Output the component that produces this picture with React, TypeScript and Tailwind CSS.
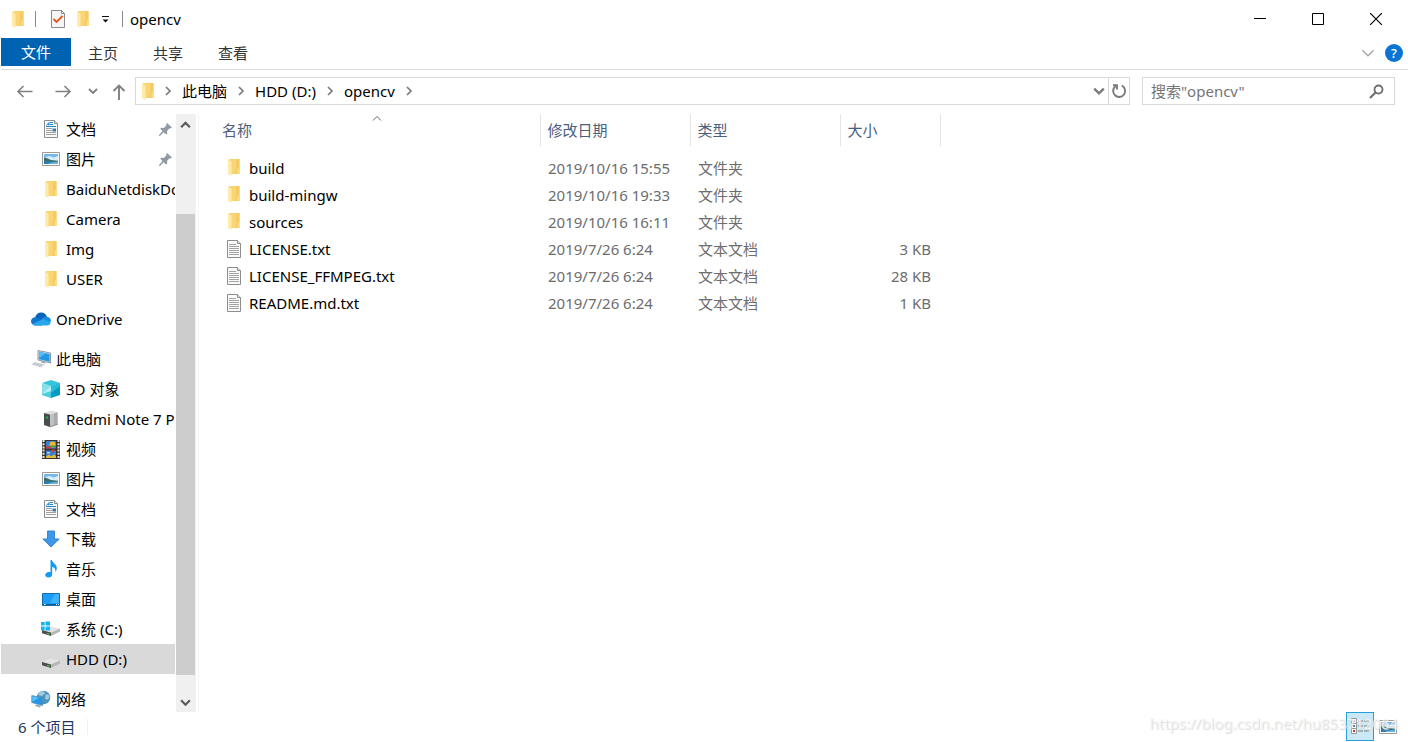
import { useState } from 'react';
import type { ReactNode } from 'react';

type IconName =
    | 'folder' | 'document' | 'picture' | 'onedrive' | 'computer' | 'cube' | 'phone' | 'video'
    | 'download' | 'music' | 'desktop' | 'systemDrive' | 'drive' | 'network' | 'text';

interface NavItem {
    label: string;
    icon: IconName;
    root?: boolean;
    pinned?: boolean;
    selected?: boolean;
}

interface FileEntry {
    name: string;
    icon: IconName;
    modified: string;
    type: string;
    size: string;
}

const navGroups: NavItem[][] = [
    [
        { label: '文档', icon: 'document', pinned: true },
        { label: '图片', icon: 'picture', pinned: true },
        { label: 'BaiduNetdiskDownload', icon: 'folder' },
        { label: 'Camera', icon: 'folder' },
        { label: 'Img', icon: 'folder' },
        { label: 'USER', icon: 'folder' },
    ],
    [{ label: 'OneDrive', icon: 'onedrive', root: true }],
    [
        { label: '此电脑', icon: 'computer', root: true },
        { label: '3D 对象', icon: 'cube' },
        { label: 'Redmi Note 7 Pro', icon: 'phone' },
        { label: '视频', icon: 'video' },
        { label: '图片', icon: 'picture' },
        { label: '文档', icon: 'document' },
        { label: '下载', icon: 'download' },
        { label: '音乐', icon: 'music' },
        { label: '桌面', icon: 'desktop' },
        { label: '系统 (C:)', icon: 'systemDrive' },
        { label: 'HDD (D:)', icon: 'drive', selected: true },
    ],
    [{ label: '网络', icon: 'network', root: true }],
];

const files: FileEntry[] = [
    { name: 'build', icon: 'folder', modified: '2019/10/16 15:55', type: '文件夹', size: '' },
    { name: 'build-mingw', icon: 'folder', modified: '2019/10/16 19:33', type: '文件夹', size: '' },
    { name: 'sources', icon: 'folder', modified: '2019/10/16 16:11', type: '文件夹', size: '' },
    { name: 'LICENSE.txt', icon: 'text', modified: '2019/7/26 6:24', type: '文本文档', size: '3 KB' },
    { name: 'LICENSE_FFMPEG.txt', icon: 'text', modified: '2019/7/26 6:24', type: '文本文档', size: '28 KB' },
    { name: 'README.md.txt', icon: 'text', modified: '2019/7/26 6:24', type: '文本文档', size: '1 KB' },
];

const FolderIcon = () => (
    <svg width="12" height="17" viewBox="0 0 12 17">
        <path d="M1 0h10.5v11H12v4H1z" fill="#f9d675" />
        <path d="M8 0h3.5v11H12v4H7.5z" fill="#f5cb68" />
        <path d="M9.5 9.5h2.5V15H9.5z" fill="#fbdc82" />
        <path d="M0 .5 3.5 2.5V17L0 15z" fill="#ffeaa8" />
    </svg>
);

const DriveBody = () => (
    <>
        <path d="M1 12 9 8.5l10 2-9 4z" fill="#e3e3e5" />
        <path d="M1 12l9 2.5V18l-9-2.7z" fill="#4c4f50" />
        <path d="M10 14.5 19 10.5v3L10 18z" fill="#b4b6b8" />
        <path d="M6 15.5l2.5.7" stroke="#39d353" strokeWidth="1.2" />
    </>
);

const TextFileIcon = () => (
    <svg width="16" height="18" viewBox="0 0 16 18">
        <path d="M1.5.5h10l3 3v14h-13z" fill="#fafafa" stroke="#8d8d8d" />
        <path d="M11.5.5v3h3" fill="#e6e6e6" stroke="#8d8d8d" />
        <path d="M3 4.5h7M3 6.5h10M3 8.5h10M3 10.5h10M3 12.5h10M3 14.5h10" stroke="#a3a3a3" />
    </svg>
);

const PictureIcon = () => (
    <svg width="18" height="14" viewBox="0 0 18 14">
        <path d="M.5.5h17v13H.5z" fill="#fff" stroke="#9a9a9a" />
        <path d="M2 2h14v10H2z" fill="#75b7ec" />
        <path d="M2 5.5 7 4l5 1.5L16 4v5H2z" fill="#d8edf8" />
        <path d="M2 5.5c3 0 4.5 1.5 7 2.5l7 .8V10H2z" fill="#3b6f66" />
        <path d="M2 9.2l14 .3V12H2z" fill="#2c7bb5" />
        <path d="M7 11l9-1.5V12H7z" fill="#6cb1dc" />
    </svg>
);

const icons: Record<IconName, ReactNode> = {
    folder: <FolderIcon />,
    text: <TextFileIcon />,
    picture: <PictureIcon />,
    document: (
        <svg width="16" height="18" viewBox="0 0 16 18">
            <path d="M1.5.5h10l3 3v14h-13z" fill="#fafafa" stroke="#8d8d8d" />
            <path d="M11.5.5v3h3" fill="#e0e0e0" stroke="#8d8d8d" />
            <path d="M3.5 5.5 6 2.5v3M4.5 4.5H6M7 2.5h3M7 4.5h3M3 6.5h10" stroke="#1c87cf" fill="none" />
            <path d="M3 8.5h6M3 10.5h6M3 12.5h10M3 14.5h10" stroke="#a0a0a0" />
            <path d="M9.5 8.5H13v3H9.5z" fill="#3977a8" />
        </svg>
    ),
    onedrive: (
        <svg width="20" height="14" viewBox="0 0 20 14">
            <path d="M4 5.5C5 2 7.5.5 10 .5c3.3 0 5.3 2 6 4.5L10 9z" fill="#0864b8" />
            <path d="M5 13.5c-3 0-5-1.8-5-4.2C0 7 1.8 5.2 4.2 5.2L12 8l-1 5.5z" fill="#1078d0" />
            <path d="M10 8c1-2.5 3.5-3.5 6-3.2 2.5.3 4 2 4 4.4L17 11z" fill="#1790df" />
            <path d="M1.5 12 12 7.3l7.8 2.9c-.3 2-1.8 3.3-3.8 3.3H5c-1.5 0-2.6-.5-3.5-1.500z" fill="#28a8ea" />
        </svg>
    ),
    computer: (
        <svg width="20" height="18" viewBox="0 0 20 18">
            <path d="M0 14.5 4 12l10 2.5-4 3z" fill="#d5d8da" />
            <path d="M2 14.7l3-2M5 15.5l3-2M8 16.3l3-2" stroke="#a9adb0" strokeWidth=".7" />
            <path d="M7 .5 19.5 3v10L7 10z" fill="#e0e6e9" stroke="#6e7f8b" strokeWidth=".8" />
            <path d="M8 1.7 18.6 4v7.8L8 9.2z" fill="#2298e5" />
            <path d="M8 1.7 15 3.2 8 8z" fill="#55bdf5" />
            <path d="M10 11l4 1v1.5l-4-1z" fill="#a1aab0" />
        </svg>
    ),
    cube: (
        <svg width="18" height="18" viewBox="0 0 18 18">
            <path d="M9 0 18 3 9 6.3 0 3z" fill="#35c6dc" />
            <path d="M0 3 9 6.3V18l-9-3z" fill="#85e0ec" />
            <path d="M18 3 9 6.3V18l9-3z" fill="#079ac4" />
            <path d="M9 6.3v11L0 14z" fill="#b7eff4" />
            <path d="M0 14l9-3v7l-9-3z" fill="#4cced9" />
            <path d="M9 6.3V13l9-7V3z" fill="#2bbbdd" />
        </svg>
    ),
    phone: (
        <svg width="16" height="18" viewBox="0 0 16 18">
            <path d="M1 3 9 .5l5.5 1.8L7 4.5z" fill="#dedede" />
            <path d="M1 3l6 1.5V17l-6-2z" fill="#4a4d4e" />
            <path d="M7 4.5 14.5 2.3V14L7 17z" fill="#bfc0c2" />
            <path d="M11 3.5l3.5-1.2V14L11 15.5z" fill="#a9abad" />
            <path d="M3 6.5h2v2H3z" fill="#27b23a" />
            <path d="M7 17l8-3" stroke="#888" />
        </svg>
    ),
    video: (
        <svg width="18" height="19" viewBox="0 0 18 19">
            <path d="M0 0h18v19H0z" fill="#39332f" />
            <path d="M1.5 0v19M16.5 0v19" stroke="#e9e9e9" strokeWidth="2" strokeDasharray="2 1.2" />
            <path d="M4 1h10v7.5H4zM4 10.5h10V18H4z" fill="#3f7fd0" />
            <circle cx="10.5" cy="4.5" r="3" fill="#e7bb35" />
            <path d="M4 6.5h5V8.5H4zM9 9.5h4L11 13z" fill="#d23b30" />
            <path d="M8 5.5h6v1.5H8z" fill="#4b9b36" />
            <path d="M4 16.5l3-2 2 2 3-2 2 2V18H4z" fill="#e7bb35" />
            <path d="M5 12h3v1.5H5z" fill="#b0d7f5" />
        </svg>
    ),
    download: (
        <svg width="18" height="18" viewBox="0 0 18 18">
            <path d="M5.5 1h7v8h4.7L9 17 .8 9h4.7z" fill="#3d98ea" stroke="#2f80cc" strokeWidth=".9" />
        </svg>
    ),
    music: (
        <svg width="14" height="18" viewBox="0 0 14 18">
            <path d="M6.5 0H8c.3 3 4.8 4.2 4.8 8 0 1.8-.6 3-1.5 4 .6-3-.8-4.7-3.1-5v7.5c0 1.8-1.7 3-3.7 3S1.200 16.600 1.200 15c0-1.700 2-3.200 4-3 .5 0 1 .1 1.300.3z" fill="#129bf0" />
        </svg>
    ),
    desktop: (
        <svg width="18" height="13" viewBox="0 0 18 13">
            <path d="M.5.5h17v12H.5z" fill="#1a9cf8" stroke="#126db1" />
            <path d="M8 10l5-9h4v9z" fill="#3fb2fd" />
            <path d="M1 11.5h16" stroke="#0b5897" />
            <path d="M2 11.5h1.5M14 11.5h1M16 11.5h.8" stroke="#fff" />
        </svg>
    ),
    systemDrive: (
        <svg width="20" height="18" viewBox="0 0 20 18">
            <g transform="translate(0 -2)"><DriveBody /></g>
            <path d="M0 2h3.7v3.6H0zM4.5 1.5H9v4.1H4.5zM0 6.4h3.7V10H0zM4.5 6.4H9v4.1H4.5z" fill="#12b5f1" />
        </svg>
    ),
    drive: (
        <svg width="20" height="18" viewBox="0 0 20 18"><DriveBody /></svg>
    ),
    network: (
        <svg width="20" height="18" viewBox="0 0 20 18">
            <circle cx="12.5" cy="7.5" r="6.8" fill="#4f94bd" />
            <path d="M8 3c3-2.5 5-2 6 .5L11 6 7 5zM15 4l3 1 .5 3-3 2L14 8z" fill="#a3cbe0" />
            <path d="M.8 5.5 11.5 8v7.5L.8 12.5z" fill="#2696e3" stroke="#4a8fc0" strokeWidth=".8" />
            <path d="M1.3 6.2 8 7.8l-6.7 4z" fill="#5dc0f7" />
            <path d="M5 14.5l5 1.3-1 1.7-5-1.5z" fill="#9aa6ad" />
        </svg>
    ),
};

const PinIcon = () => (
    <svg width="13" height="13" viewBox="0 0 13 13" className="shrink-0">
        <path d="M8 0l5 4.5-1.5 1-1-.2L8 8l.3 2.5-1.2 1L4.6 9.2 1 13l-1-.2L.1 12l3.4-4L1.2 5.8l1-1 2.6.2L7.5 2.3 7.2 1z" fill="#8e9aa5" />
    </svg>
);

interface ChevronProps {
    direction: 'up' | 'down' | 'right';
    size?: number;
    weight?: number;
}

const chevronPaths = {
    up: 'M1 7.5 5 3.5 9 7.5',
    down: 'M1 3 5 7 9 3',
    right: 'M3 1 7 5 3 9',
};

const Chevron = ({ direction, size = 10, weight = 2 }: ChevronProps) => (
    <svg width={size} height={size} viewBox="0 0 10 10" fill="none" stroke="currentColor" strokeWidth={weight}>
        <path d={chevronPaths[direction]} />
    </svg>
);

const TitleBar = () => (
    <header className="flex h-[38px] items-center justify-between pl-3">
        <div className="flex items-center">
            <FolderIcon />
            <span className="mx-[11px] h-4 w-px bg-[#8a8a8a]" />
            <button aria-label="属性" className="ml-1">
                <svg width="14" height="18" viewBox="0 0 14 18">
                    <path d="M.5.5h10l3 3v14H.5z" fill="#f6f6f6" stroke="#8b8b8b" />
                    <path d="M10.5.5v3h3" fill="none" stroke="#8b8b8b" />
                    <path d="M2.5 9l3 3L11.5 6" fill="none" stroke="#e8541c" strokeWidth="1.8" />
                </svg>
            </button>
            <button aria-label="新建文件夹" className="ml-3"><FolderIcon /></button>
            <button aria-label="自定义快速访问工具栏" className="ml-3">
                <svg width="9" height="8" viewBox="0 0 9 8">
                    <path d="M1 1.5h7" stroke="#111" />
                    <path d="M1.5 4.5h6L4.5 7.5z" fill="#111" />
                </svg>
            </button>
            <span className="ml-3 mr-[7px] h-4 w-px bg-[#8a8a8a]" />
            <h1>opencv</h1>
        </div>
        <div className="flex h-full pr-[3px]">
            <button aria-label="最小化" className="grid w-[58px] place-items-center">
                <svg width="12" height="12" viewBox="0 0 12 12"><path d="M0 5.5h12" stroke="#000" /></svg>
            </button>
            <button aria-label="最大化" className="grid w-[58px] place-items-center">
                <svg width="12" height="12" viewBox="0 0 12 12"><path d="M.5.5h11v11H.5z" stroke="#000" fill="none" /></svg>
            </button>
            <button aria-label="关闭" className="grid w-[58px] place-items-center">
                <svg width="12" height="12" viewBox="0 0 12 12"><path d="M0 0l12 12M12 0 0 12" stroke="#000" strokeWidth="1.2" /></svg>
            </button>
        </div>
    </header>
);

const Ribbon = () => (
    <nav className="ml-px flex h-8 justify-between border-b border-[#dadbdc] text-[#333]">
        <div className="flex h-7">
            <button className="w-[70px] bg-[#0063b1] text-white">文件</button>
            <button className="w-16 pt-px">主页</button>
            <button className="w-[66px] pt-px">共享</button>
            <button className="w-16 pt-px">查看</button>
        </div>
        <div className="flex h-[30px] items-center gap-[10px] pr-[5px]">
            <button aria-label="展开功能区" className="text-[#a5a5a5]">
                <Chevron direction="down" size={14} weight={1} />
            </button>
            <button aria-label="帮助" className="grid size-[18px] place-items-center rounded-full bg-[#0a74d4] text-[13px] font-medium leading-none text-white">
                ?
            </button>
        </div>
    </nav>
);

const Crumb = ({ children }: { children: ReactNode }) => (
    <>
        <span className="text-[#7a7a7a]"><Chevron direction="right" weight={1.7} /></span>
        <button>{children}</button>
    </>
);

const AddressRow = () => {
    const [query, setQuery] = useState('');

    return (
        <div className="flex items-center pb-[9px] pl-4 pr-[13px] pt-[7px]">
            <div className="flex w-[119px] shrink-0 items-center text-[#808080]">
                <button aria-label="返回" className="mr-[22px]">
                    <svg width="17" height="14" viewBox="0 0 17 14" fill="none" stroke="currentColor" strokeWidth="1.6">
                        <path d="M16.5 7.5H2M7.5 2 2 7.5 7.5 13" />
                    </svg>
                </button>
                <button aria-label="前进" className="mr-4">
                    <svg width="17" height="14" viewBox="0 0 17 14" fill="none" stroke="currentColor" strokeWidth="1.6">
                        <path d="M.5 7.5H15M9.5 2 15 7.5 9.5 13" />
                    </svg>
                </button>
                <button aria-label="最近浏览的位置" className="mr-[14px]"><Chevron direction="down" size={10} weight={1.8} /></button>
                <button aria-label="上移">
                    <svg width="14" height="17" viewBox="0 0 14 17" fill="none" stroke="currentColor" strokeWidth="1.9">
                        <path d="M7 17V2.5M1.5 8 7 2.5 12.5 8" />
                    </svg>
                </button>
            </div>
            <div className="flex h-7 min-w-0 flex-1 items-center border border-[#d9d9d9] pl-[6px]">
                <div className="flex flex-1 items-center gap-[9px]">
                    <FolderIcon />
                    <Crumb>此电脑</Crumb>
                    <Crumb>HDD (D:)</Crumb>
                    <Crumb>opencv</Crumb>
                    <span className="text-[#7a7a7a]"><Chevron direction="right" weight={1.7} /></span>
                </div>
                <button aria-label="以前的位置" className="px-[3px] text-[#7a7a7a]"><Chevron direction="down" size={12} /></button>
                <button aria-label="刷新" className="grid h-full w-[21px] place-items-center border-l border-[#d9d9d9] text-[#7a7a7a]">
                    <svg width="16" height="16" viewBox="0 0 16 16" fill="none" stroke="currentColor" strokeWidth="1.9">
                        <path d="M10.8 2.6A6 6 0 1 1 4.5 3.2M2 2.2h4v4.3" />
                    </svg>
                </button>
            </div>
            <div className="ml-3 flex h-7 w-[253px] items-center border border-[#d9d9d9] pl-2 pr-[10px] text-[#6d6d6d]">
                <input
                    type="text"
                    aria-label="搜索"
                    value={query}
                    onChange={e => setQuery(e.target.value)}
                    placeholder={'搜索"opencv"'}
                    className="min-w-0 flex-1 outline-none placeholder:text-[#757575]"
                />
                <svg width="15" height="15" viewBox="0 0 15 15" fill="none" stroke="currentColor">
                    <circle cx="9.5" cy="5.5" r="4" strokeWidth="1.8" />
                    <path d="M6.5 8.5 1 14" strokeWidth="2.2" />
                </svg>
            </div>
        </div>
    );
};

const NavRow = ({ item }: { item: NavItem }) => (
    <li>
        <a
            href="#"
            className={`flex h-[30px] items-center gap-[5px] pr-[3px] ${item.root ? 'pl-[30px]' : 'pl-10'} ${item.selected ? 'bg-[#d9d9d9]' : ''}`}
        >
            <span className="grid w-5 shrink-0 place-items-center">{icons[item.icon]}</span>
            <span className="flex-1 whitespace-nowrap">{item.label}</span>
            {item.pinned && <PinIcon />}
        </a>
    </li>
);

const Sidebar = () => (
    <aside className="flex w-[199px] shrink-0 border-r border-[#f3f3f3]">
        {/* The tree is clipped by the pane, the status bar sits right below */}
        <nav className="ml-px mr-px h-[598px] min-w-0 flex-1 overflow-hidden">
            {navGroups.map((group, i) => (
                <ul key={i} className="mb-[10px]">
                    {group.map(item => <NavRow key={item.label} item={item} />)}
                </ul>
            ))}
        </nav>
        <div className="mr-[2px] flex w-5 flex-col bg-[#f0f0f0] text-[#5c5c5c]">
            <button aria-label="向上滚动" className="grid h-5 place-items-center pr-px"><Chevron direction="up" size={11} /></button>
            <div className="grow-[80]" />
            <div className="mr-px grow-[461] bg-[#cdcdcd]" />
            <div className="grow-[17]" />
            <button aria-label="向下滚动" className="grid h-5 place-items-center pr-px"><Chevron direction="down" size={11} /></button>
        </div>
    </aside>
);

const FileTable = () => (
    <main className="min-w-0 flex-1 pl-[15px]">
        <table className="w-[726px] table-fixed text-left">
            <colgroup>
                <col className="w-[326px]" />
                <col className="w-[150px]" />
                <col className="w-[150px]" />
                <col className="w-[100px]" />
            </colgroup>
            <thead className="text-[#4c607a]">
                <tr className="h-8">
                    <th className="relative border-r border-[#e5e5e5] pl-2 font-normal">
                        名称
                        <span className="absolute left-1/2 top-0 -translate-x-1/2 -translate-y-px text-[#666]">
                            <Chevron direction="up" weight={1} />
                        </span>
                    </th>
                    <th className="border-r border-[#e5e5e5] pl-[7px] font-normal">修改日期</th>
                    <th className="border-r border-[#e5e5e5] pl-[7px] font-normal">类型</th>
                    <th className="border-r border-[#e5e5e5] pl-[7px] font-normal">大小</th>
                </tr>
            </thead>
            <tbody className="text-[#6d6d6d] before:block before:h-2">
                {files.map(file => (
                    <tr key={file.name} className="h-[27px]">
                        <td className="pl-[10px] text-black">
                            <div className="flex items-center gap-[5px]">
                                <span className="grid w-5 justify-items-center">{icons[file.icon]}</span>
                                {file.name}
                            </div>
                        </td>
                        <td className="whitespace-nowrap pl-2">{file.modified}</td>
                        <td className="pl-2">{file.type}</td>
                        <td className="pr-[9px] text-right">{file.size}</td>
                    </tr>
                ))}
            </tbody>
        </table>
    </main>
);

const StatusBar = () => (
    <footer className="relative flex h-[30px] items-center justify-between pl-[18px] pr-2 text-[#1e395b]">
        <span className="border-r border-[#f0f0f0] pr-3 leading-4">6 个项目</span>
        <div className="flex h-full items-center gap-[2px]">
            <button aria-label="详细信息" className="grid h-[29px] w-7 place-items-center self-start border border-[#26a0da] bg-[#cbe8f6]">
                <svg width="18" height="17" viewBox="0 0 18 17" fill="none">
                    <path d="M.5.5h5v5h-5zM.5 5.5h5v5h-5zM.5 10.5h5v5h-5z" fill="#fff" stroke="#969696" />
                    <path d="M2 2h2v2H2z" fill="#2a7bb9" />
                    <path d="M2 7h2v2H2z" fill="#4b7da0" />
                    <path d="M2 12h2v2H2z" fill="#c8352b" />
                    <path d="M7 3h5M13 3h5M7 8h5M13 8h5M7 13h5M13 13h5" stroke="#7a7a7a" />
                </svg>
            </button>
            <button aria-label="大图标" className="grid w-6 place-items-center"><PictureIcon /></button>
        </div>
        <span className="pointer-events-none absolute right-[10px] top-px text-[15px] text-[#f4f4f4]/80 [text-shadow:1px_1px_1px_#dadada]">
            https://blog.csdn.net/hu853712064
        </span>
    </footer>
);

export default function App() {
    return (
        <div className="flex min-h-screen flex-col bg-white font-['Noto_Sans','Noto_Sans_CJK_SC',sans-serif] text-[15px] leading-5 text-black">
            <TitleBar />
            <Ribbon />
            <AddressRow />
            <div className="flex flex-1">
                <Sidebar />
                <FileTable />
            </div>
            <StatusBar />
        </div>
    );
}
